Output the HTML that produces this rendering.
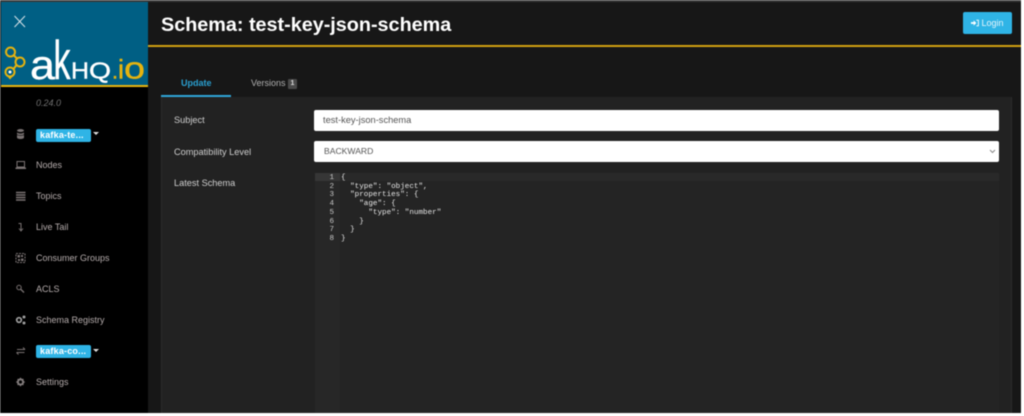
<!DOCTYPE html>
<html><head><meta charset="utf-8"><style>
html,body{margin:0;padding:0;background:#fff}
body{width:1024px;height:416px;overflow:hidden;position:relative;font-family:"Liberation Sans",sans-serif}
.a{position:absolute}
.t{position:absolute;white-space:nowrap}
.nav{color:#b5acac;font-size:9px;left:36px;line-height:12px}
.ic{position:absolute;left:14px;width:13px;height:12px;opacity:.72}
.badge{position:absolute;left:36px;width:55px;height:13px;background:#2fb4e6;border-radius:2px;color:#fff;font-weight:bold;font-size:9px;line-height:13px;text-indent:4px;letter-spacing:.2px}
.car{position:absolute;left:93px;width:0;height:0;border-left:3px solid transparent;border-right:3px solid transparent;border-top:3px solid #ddd}
.lab{color:#cfcfcf;font-size:9.2px;left:174px;line-height:12px}
.code{font-family:"Liberation Mono",monospace;font-size:7.6px;line-height:8.7px;color:#e6e6e6;white-space:pre}
#w{filter:blur(.4px)}
</style></head><body>
<div id="w" class="a" style="left:0;top:0;width:1021px;height:413px;background:#171717;overflow:hidden">
<div class="a" style="left:0;top:0;width:1021px;height:2px;background:#3a3a3a"></div>
<div class="a" style="left:148px;top:45px;width:873px;height:2px;background:#d2a011"></div>
<div class="a" style="left:1px;top:2px;width:147px;height:411px;background:#000"></div>
<div class="a" style="left:1px;top:2px;width:147px;height:83px;background:#005f84"></div>
<div class="a" style="left:1px;top:85px;width:147px;height:2px;background:#e5b30f"></div>
<svg class="a" style="left:0;top:0" width="148" height="90" viewBox="0 0 148 90">
<path d="M14.500 16 L25 27 M25 16 L14.500 27" stroke="#cfdde4" stroke-width="1.100" fill="none"/>
<g fill="none" stroke="#e5b30f" stroke-width="2">
<circle cx="10.500" cy="52" r="4.500"/><circle cx="20" cy="62" r="4.500"/><circle cx="10" cy="72" r="4.500"/>
<path d="M14 55.500 L17 58.500 M16.500 65 L13.500 69"/>
</g>
<circle cx="10" cy="72" r="1.500" fill="#fff"/>
<path d="M7 76 L10 79.500 L13 76Z" fill="#e5b30f"/>
<g font-family="'Liberation Sans',sans-serif" fill="#fff" stroke="#fff" stroke-width=".4">
<text x="30" y="79" font-size="41" textLength="25" lengthAdjust="spacingAndGlyphs">a</text>
<text x="53.500" y="79" font-size="55" textLength="17" lengthAdjust="spacingAndGlyphs">k</text>
<text x="71" y="78.500" font-size="23" textLength="18" lengthAdjust="spacingAndGlyphs">H</text>
<text x="89" y="78.500" font-size="23" textLength="22" lengthAdjust="spacingAndGlyphs">Q</text>
</g>
<g font-family="'Liberation Sans',sans-serif" fill="#e5b30f" stroke="#e5b30f" stroke-width=".4">
<text x="112" y="78.500" font-size="22" textLength="6" lengthAdjust="spacingAndGlyphs">.</text>
<text x="118" y="78.500" font-size="27" textLength="6" lengthAdjust="spacingAndGlyphs">i</text>
<text x="124" y="78.500" font-size="31" textLength="21" lengthAdjust="spacingAndGlyphs">o</text>
</g>
</svg>
<div class="t" style="left:36px;top:97px;color:#6f6f6f;font-size:9px;font-style:italic;line-height:12px">0.24.0</div>

<svg class="ic" style="top:128px" viewBox="0 0 13 12"><ellipse cx="6.500" cy="2.500" rx="3.500" ry="1.500" fill="#a89e9e"/><path d="M3 4v5.500c0 2 7 2 7 0V4c0 2-7 2-7 0z" fill="#a89e9e"/><path d="M3 6.500c1 1.300 6 1.300 7 0" stroke="#000" stroke-width=".6" fill="none"/></svg>
<div class="badge" style="top:129px">kafka-te...</div><div class="car" style="top:132px"></div>

<svg class="ic" style="top:159px" viewBox="0 0 13 12"><rect x="3" y="2.500" width="7.500" height="5.500" fill="none" stroke="#a89e9e" stroke-width="1"/><rect x="1.500" y="8.500" width="10.500" height="1.500" fill="#a89e9e"/></svg>
<div class="t nav" style="top:159px">Nodes</div>
<svg class="ic" style="top:190px" viewBox="0 0 13 12"><path d="M2 2.500h9.500M2 5h9.500M2 7.500h9.500M2 10h9.500" stroke="#a89e9e" stroke-width="1.500"/></svg>
<div class="t nav" style="top:190px">Topics</div>
<svg class="ic" style="top:221px" viewBox="0 0 13 12"><path d="M4.500 2.500h2.500v6.500M5 7.500l2 2.500 2-2.500" stroke="#a89e9e" stroke-width="1" fill="none"/></svg>
<div class="t nav" style="top:221px">Live Tail</div>
<svg class="ic" style="top:252px" viewBox="0 0 13 12"><path d="M2 1.500h9v9H2z" fill="none" stroke="#a89e9e" stroke-width="1" stroke-dasharray="2 1"/><path d="M3.500 3h2.500v2.500H3.500zM7 6.500h2.500V9H7zM7 3h2v2H7zM4 7h2v2H4z" fill="#a89e9e"/></svg>
<div class="t nav" style="top:252px">Consumer Groups</div>
<svg class="ic" style="top:283px" viewBox="0 0 13 12"><circle cx="5" cy="4.500" r="2.200" fill="none" stroke="#a89e9e" stroke-width="1"/><path d="M6.500 6l3.500 3.500" stroke="#a89e9e" stroke-width="1.300"/></svg>
<div class="t nav" style="top:283px">ACLS</div>
<svg class="ic" style="top:314px" viewBox="0 0 13 12"><circle cx="5" cy="6" r="2.300" fill="none" stroke="#ddd" stroke-width="1.700"/><circle cx="10" cy="3" r="1.500" fill="#ddd"/><circle cx="10" cy="9" r="1.500" fill="#ddd"/></svg>
<div class="t nav" style="top:314px">Schema Registry</div>
<svg class="ic" style="top:345px" viewBox="0 0 13 12"><path d="M3 4.500h8M9 2.500l2 2M10.500 7.500h-8M4.500 9.500l-2-2" stroke="#a89e9e" stroke-width="1" fill="none"/></svg>
<div class="badge" style="top:345px">kafka-co...</div><div class="car" style="top:349px"></div>
<svg class="ic" style="top:376px" viewBox="0 0 13 12"><circle cx="6.500" cy="6" r="2.600" fill="none" stroke="#b5acac" stroke-width="2"/><path d="M6.500 1.800v1M6.500 9.200v1M2.300 6h1M9.700 6h1M3.600 3.100l.7.700M8.700 8.200l.7.700M3.600 8.900l.7-.7M8.700 3.800l.7-.7" stroke="#b5acac" stroke-width="1.200"/></svg>
<div class="t nav" style="top:376px">Settings</div>

<div class="t" style="left:161px;top:13px;color:#fff;font-size:19.800px;font-weight:bold;line-height:25px">Schema: test-key-json-schema</div>
<div class="a" style="left:963px;top:12px;width:49px;height:22px;background:#2fb4e6;border-radius:2px;color:#e8f6fc;font-size:9px;line-height:22px;text-align:center">
<svg width="8" height="8" viewBox="0 0 9 8" style="vertical-align:-1px;margin-right:2px"><path d="M0 3h3V1l3 3-3 3V5H0z" fill="#fff"/><path d="M6 .8h2.300v6.400H6" stroke="#fff" fill="none"/></svg>Login</div>

<div class="t" style="left:181px;top:77px;color:#2a9fd0;font-size:9px;font-weight:bold;line-height:12px">Update</div>
<div class="a" style="left:161px;top:95px;width:70px;height:2px;background:#2fa6d9"></div>
<div class="t" style="left:251px;top:77px;color:#b0b0b0;font-size:9px;line-height:12px">Versions</div>
<div class="a" style="left:288px;top:79px;width:9px;height:10px;background:#4a4a4a;border-radius:1px;color:#ddd;font-size:7px;font-weight:bold;line-height:10px;text-align:center">1</div>

<div class="a" style="left:161px;top:97px;width:851px;height:316px;background:#222;border-left:1px solid #2b2b2b;border-right:1px solid #2b2b2b;box-sizing:border-box"></div>
<div class="t lab" style="top:114px">Subject</div>
<div class="t lab" style="top:146px">Compatibility Level</div>
<div class="t lab" style="top:177px">Latest Schema</div>
<div class="a" style="left:314px;top:110px;width:685px;height:21px;background:#fff;border-radius:2px;color:#555;font-size:9.300px;line-height:21px;text-indent:9px">test-key-json-schema</div>
<div class="a" style="left:314px;top:141px;width:685px;height:21px;background:#fff;border-radius:2px;color:#555;font-size:8.600px;line-height:21px;text-indent:10px">BACKWARD
<svg class="a" style="right:3px;top:8px" width="7" height="5" viewBox="0 0 7 5"><path d="M1 1l2.500 2.500L6 1" stroke="#888" fill="none"/></svg></div>

<div class="a" style="left:315px;top:173px;width:684px;height:240px;background:#242424"></div>
<div class="a" style="left:315px;top:173px;width:25px;height:240px;background:#272727"></div>
<div class="a" style="left:315px;top:173px;width:25px;height:8px;background:#363636"></div>
<div class="a" style="left:340px;top:173px;width:659px;height:8px;background:#292929"></div>
<div class="a code" style="left:322px;top:174px;width:12px;text-align:right;color:#c8c8c8">1
2
3
4
5
6
7
8</div>
<div class="a code" style="left:341px;top:174px">{
  "type": "object",
  "properties": {
    "age": {
      "type": "number"
    }
  }
}</div>
</div>
</body></html>
